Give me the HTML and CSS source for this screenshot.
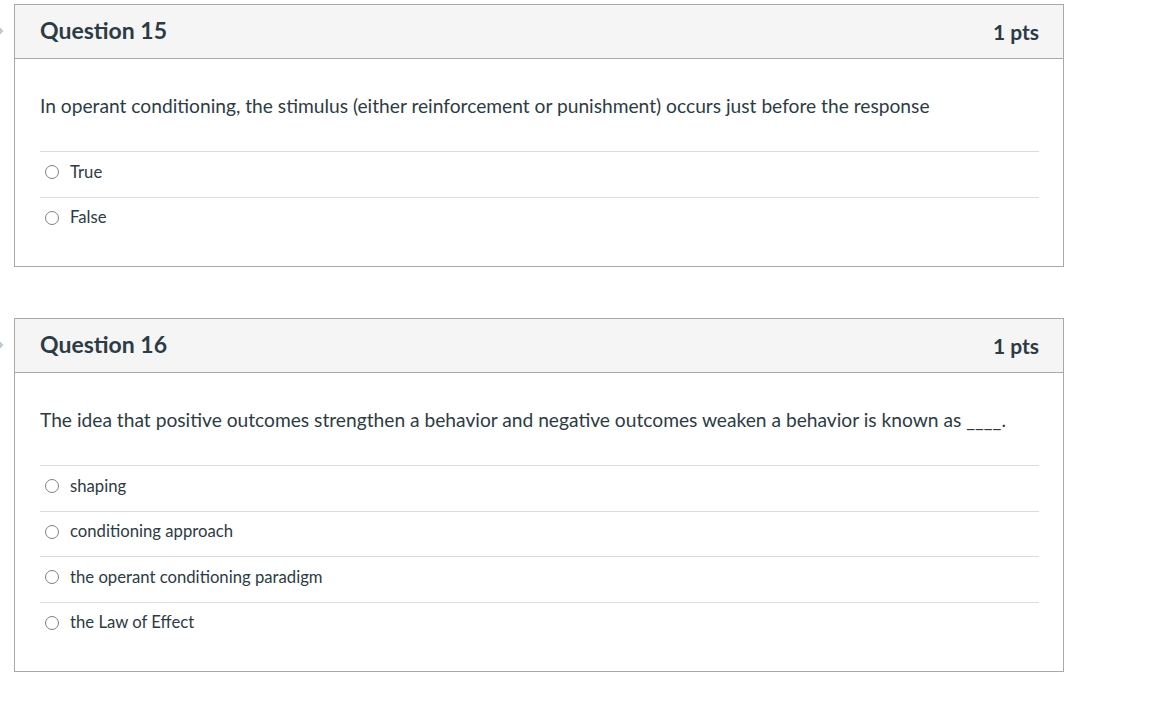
FILE: index.html
```html
<!DOCTYPE html>
<html>
<head>
<meta charset="utf-8">
<link rel="stylesheet" href="styles.css">
</head>
<body>
<div class="page">
  <div class="question">
    <svg class="marker" width="10" height="12" viewBox="0 0 10 12"><path d="M2 1 L7 6 L2 11" fill="none" stroke="#b8c4d0" stroke-width="2"/></svg>
    <div class="header">
      <span class="title">Question 15</span>
      <span class="pts">1 pts</span>
    </div>
    <div class="content">
      <div class="qtext">In operant conditioning, the stimulus (either reinforcement or punishment) occurs just before the response</div>
      <div class="answers">
        <div class="answer"><span class="radio"></span><span>True</span></div>
        <div class="answer"><span class="radio"></span><span>False</span></div>
      </div>
    </div>
  </div>
  <div class="question">
    <svg class="marker" width="10" height="12" viewBox="0 0 10 12"><path d="M2 1 L7 6 L2 11" fill="none" stroke="#b8c4d0" stroke-width="2"/></svg>
    <div class="header">
      <span class="title">Question 16</span>
      <span class="pts">1 pts</span>
    </div>
    <div class="content">
      <div class="qtext">The idea that positive outcomes strengthen a behavior and negative outcomes weaken a behavior is known as ____.</div>
      <div class="answers">
        <div class="answer"><span class="radio"></span><span>shaping</span></div>
        <div class="answer"><span class="radio"></span><span>conditioning approach</span></div>
        <div class="answer"><span class="radio"></span><span>the operant conditioning paradigm</span></div>
        <div class="answer"><span class="radio"></span><span>the Law of Effect</span></div>
      </div>
    </div>
  </div>
</div>
</body>
</html>
```
FILE: styles.css
```css
html, body {
  margin: 0;
  padding: 0;
  background: #fff;
}
body {
  font-family: Lato, "Open Sans", sans-serif;
  color: #2d3b45;
}
.page {
  padding: 4px 0 0 14px;
  display: flex;
  flex-direction: column;
  gap: 51px;
}
.question {
  position: relative;
  width: 1048px;
  border: 1px solid #a9a9a9;
  background: #fff;
}
.marker {
  position: absolute;
  left: -20px;
  top: 20px;
}
.header {
  height: 53px;
  background: #f5f5f5;
  border-bottom: 1px solid #a9a9a9;
  display: flex;
  align-items: center;
  justify-content: space-between;
  padding: 0 24px 0 25px;
}
.title {
  font-size: 23px;
  font-weight: 700;
  color: #2d3b45;
  margin-top: -4px;
}
.pts {
  font-size: 21px;
  font-weight: 700;
  color: #2d3b45;
  margin-top: -1px;
}
.content {
  padding: 33px 24px 24px 25px;
}
.qtext {
  font-size: 19.2px;
  line-height: 28px;
}
.answers {
  margin-top: 31px;
}
.answer {
  border-top: 1px solid #dcdcdc;
  height: 44.5px;
  box-sizing: content-box;
  display: flex;
  align-items: flex-start;
  font-size: 16.7px;
  line-height: 24px;
}
.answer span:last-child {
  padding-top: 7.5px;
}
.radio {
  flex: none;
  width: 12px;
  height: 12px;
  border: 1.3px solid #808080;
  border-radius: 50%;
  margin: 13px 11px 0 5px;
}
```
